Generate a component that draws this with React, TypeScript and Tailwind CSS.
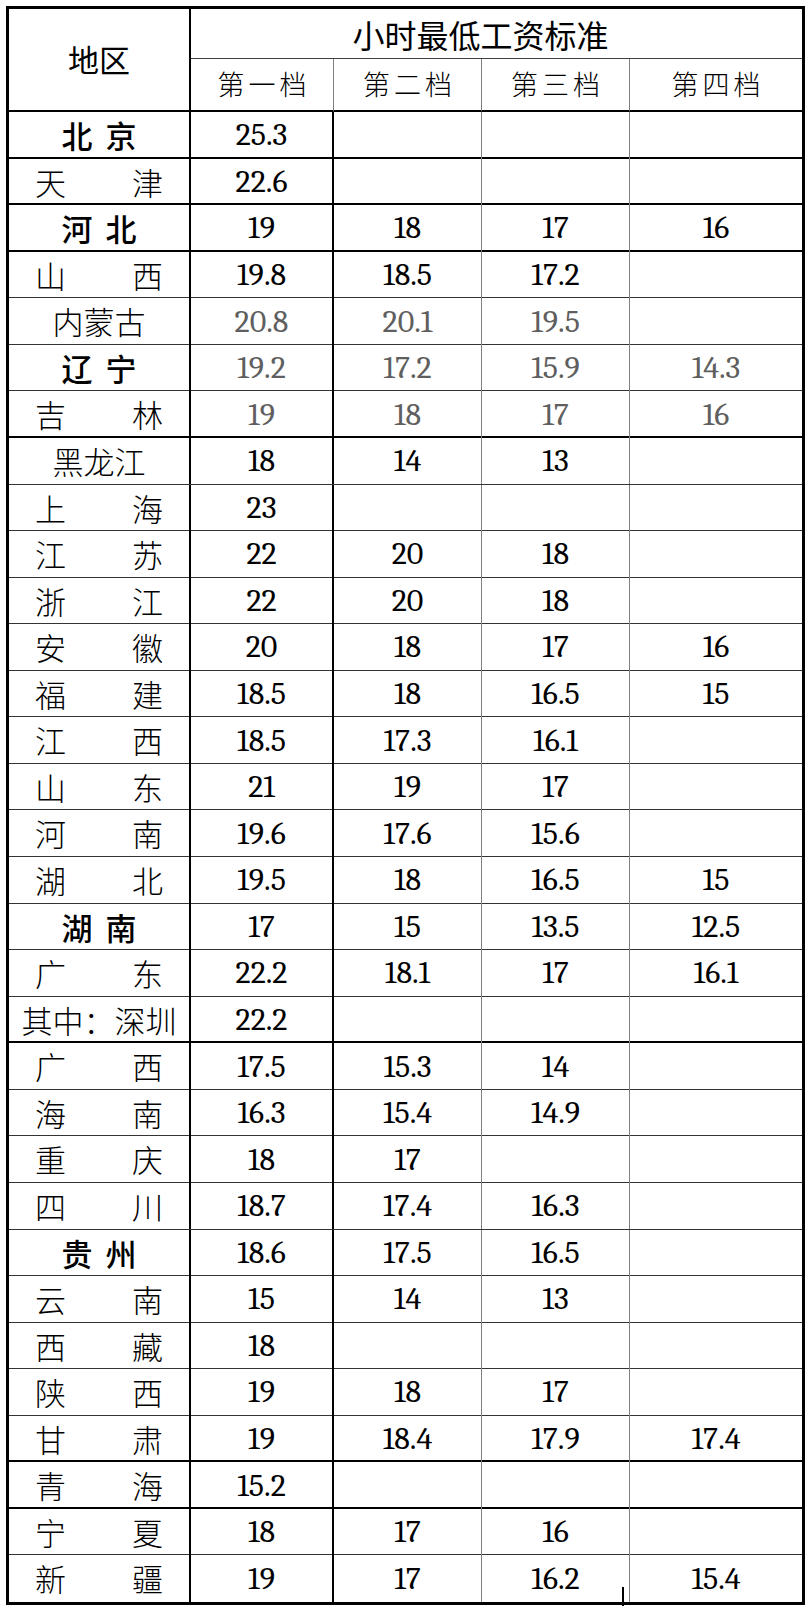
import React from "react";

type Kind = "bold" | "spread" | "center";
type Row = { name: string; kind: Kind; vals: string[]; gray?: boolean; thick?: boolean };

const rows: Row[] = [
  { name: "北京", kind: "bold", vals: ["25.3", "", "", ""], thick: true },
  { name: "天津", kind: "spread", vals: ["22.6", "", "", ""], thick: true },
  { name: "河北", kind: "bold", vals: ["19", "18", "17", "16"], thick: true },
  { name: "山西", kind: "spread", vals: ["19.8", "18.5", "17.2", ""] },
  { name: "内蒙古", kind: "center", vals: ["20.8", "20.1", "19.5", ""], gray: true },
  { name: "辽宁", kind: "bold", vals: ["19.2", "17.2", "15.9", "14.3"], gray: true },
  { name: "吉林", kind: "spread", vals: ["19", "18", "17", "16"], gray: true, thick: true },
  { name: "黑龙江", kind: "center", vals: ["18", "14", "13", ""] },
  { name: "上海", kind: "spread", vals: ["23", "", "", ""] },
  { name: "江苏", kind: "spread", vals: ["22", "20", "18", ""] },
  { name: "浙江", kind: "spread", vals: ["22", "20", "18", ""] },
  { name: "安徽", kind: "spread", vals: ["20", "18", "17", "16"] },
  { name: "福建", kind: "spread", vals: ["18.5", "18", "16.5", "15"] },
  { name: "江西", kind: "spread", vals: ["18.5", "17.3", "16.1", ""] },
  { name: "山东", kind: "spread", vals: ["21", "19", "17", ""] },
  { name: "河南", kind: "spread", vals: ["19.6", "17.6", "15.6", ""] },
  { name: "湖北", kind: "spread", vals: ["19.5", "18", "16.5", "15"] },
  { name: "湖南", kind: "bold", vals: ["17", "15", "13.5", "12.5"] },
  { name: "广东", kind: "spread", vals: ["22.2", "18.1", "17", "16.1"] },
  { name: "其中：深圳", kind: "center", vals: ["22.2", "", "", ""], thick: true },
  { name: "广西", kind: "spread", vals: ["17.5", "15.3", "14", ""] },
  { name: "海南", kind: "spread", vals: ["16.3", "15.4", "14.9", ""] },
  { name: "重庆", kind: "spread", vals: ["18", "17", "", ""] },
  { name: "四川", kind: "spread", vals: ["18.7", "17.4", "16.3", ""] },
  { name: "贵州", kind: "bold", vals: ["18.6", "17.5", "16.5", ""] },
  { name: "云南", kind: "spread", vals: ["15", "14", "13", ""] },
  { name: "西藏", kind: "spread", vals: ["18", "", "", ""] },
  { name: "陕西", kind: "spread", vals: ["19", "18", "17", ""] },
  { name: "甘肃", kind: "spread", vals: ["19", "18.4", "17.9", "17.4"], thick: true },
  { name: "青海", kind: "spread", vals: ["15.2", "", "", ""], thick: true },
  { name: "宁夏", kind: "spread", vals: ["18", "17", "16", ""] },
  { name: "新疆", kind: "spread", vals: ["19", "17", "16.2", "15.4"] },
];

function NameCell({ row }: { row: Row }) {
  const chars = Array.from(row.name);
  if (row.kind === "bold") {
    return (
      <div className="flex items-center justify-center gap-[13px] border-r-2 border-black font-['Noto_Sans_CJK_SC',sans-serif] text-[31px] font-medium text-black">
        {chars.map((c, i) => (
          <span key={i}>{c}</span>
        ))}
      </div>
    );
  }
  if (row.kind === "spread") {
    return (
      <div className="flex items-center justify-between border-r-2 border-black px-[26px] font-['Noto_Sans_CJK_SC',sans-serif] text-[31px] font-light text-black">
        {chars.map((c, i) => (
          <span key={i}>{c}</span>
        ))}
      </div>
    );
  }
  return (
    <div className="flex items-center justify-center border-r-2 border-black font-['Noto_Sans_CJK_SC',sans-serif] text-[31px] font-light text-black">
      {row.name}
    </div>
  );
}

function Num({ v, gray, ci }: { v: string; gray?: boolean; ci: number }) {
  const border = ci === 0 ? "border-r-2 border-black" : ci < 3 ? "border-r border-[#808080]" : "";
  return (
    <div className={`flex items-center justify-center ${border}`}>
      {gray ? (
        <span className="font-serif text-[32px] leading-none text-[#5f5f5f]">{v}</span>
      ) : (
        <span className="font-serif text-[32px] leading-none text-black">{v}</span>
      )}
    </div>
  );
}

export default function App() {
  return (
    <div className="relative min-h-[1606px] w-[809px] bg-white pl-[6px] pt-[6px]">
      <div className="w-[799px] border-[3px] border-black">
        {/* Header */}
        <div className="grid grid-cols-[182px_143px_148px_148px_172px] grid-rows-[50px_53px]">
          <div className="row-span-2 flex items-center justify-center border-r-2 border-b-2 border-black font-['Noto_Sans_CJK_SC',sans-serif] text-[31px] text-black">
            地区
          </div>
          <div className="col-span-4 flex items-center justify-center border-b border-[#404040] pr-[32px] font-['Noto_Sans_CJK_SC',sans-serif] text-[32px] text-black">
            小时最低工资标准
          </div>
          {["第一档", "第二档", "第三档", "第四档"].map((t, i) => (
            <div
              key={t}
              className={
                i < 3
                  ? "flex items-center justify-center border-b-2 border-r border-b-black border-r-[#808080] pl-[4px] font-['Noto_Sans_CJK_SC',sans-serif] text-[27px] font-light tracking-[4px] text-black"
                  : "flex items-center justify-center border-b-2 border-b-black pl-[4px] font-['Noto_Sans_CJK_SC',sans-serif] text-[27px] font-light tracking-[4px] text-black"
              }
            >
              {t}
            </div>
          ))}
        </div>
        {/* Body */}
        {rows.map((row, ri) => {
          const last = ri === rows.length - 1;
          const bb = last
            ? ""
            : row.thick
            ? "border-b-2 border-b-black"
            : "border-b border-b-[#333333]";
          return (
            <div
              key={ri}
              className={`grid h-[46.5625px] grid-cols-[182px_143px_148px_148px_172px] ${bb}`}
            >
              <NameCell row={row} />
              {row.vals.map((v, ci) => (
                <Num key={ci} v={v} gray={row.gray} ci={ci} />
              ))}
            </div>
          );
        })}
      </div>
      <div className="absolute left-[622px] top-[1587px] h-[19px] w-[2px] bg-black" />
    </div>
  );
}
